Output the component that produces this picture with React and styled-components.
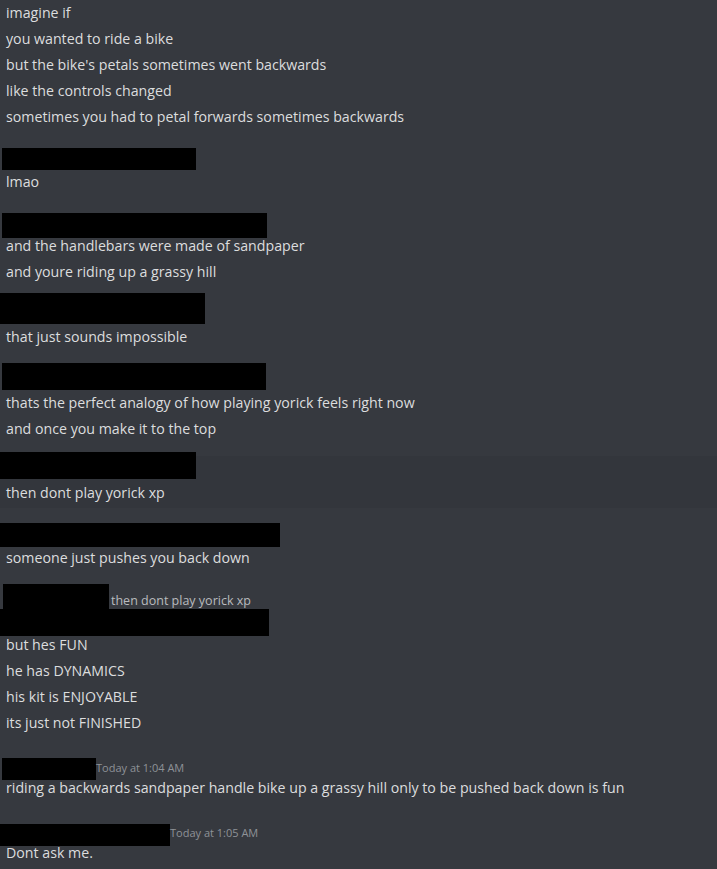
import styled, { createGlobalStyle } from "styled-components";

const GlobalStyle = createGlobalStyle`
  html, body {
    margin: 0;
    padding: 0;
    background: #36393f;
  }
  body {
    width: 717px;
    height: 869px;
    overflow: hidden;
  }
`;

const Chat = styled.div`
  width: 717px;
  height: 869px;
  overflow: hidden;
  background: #36393f;
  font-family: "Open Sans", "Noto Sans", sans-serif;
  color: #dcddde;
`;

const Group = styled.div`
  margin-top: ${(p) => p.$gap}px;
  padding-top: ${(p) => (p.$hover ? 2 : 0)}px;
  padding-bottom: 2px;
  background: ${(p) => (p.$hover ? "#33363c" : "transparent")};
`;

const Reply = styled.div`
  display: flex;
  height: 20px;
  align-items: flex-start;
`;

const ReplyText = styled.span`
  font-size: 12.5px;
  line-height: 20px;
  color: #b9bbbe;
  margin-left: 2px;
  padding-top: 1px;
`;

const Header = styled.div`
  display: flex;
  align-items: flex-start;
  height: 22px;
`;

// black box drawn over the user name
const Redaction = styled.div`
  flex: none;
  background: #000;
  width: ${(p) => p.$w}px;
  height: ${(p) => p.$h}px;
  margin-left: ${(p) => p.$x || 0}px;
  margin-top: ${(p) => p.$y || 0}px;
`;

const Timestamp = styled.span`
  font-size: 11px;
  line-height: 22px;
  padding-top: 4px;
  color: #8e9297;
`;

const Line = styled.div`
  font-size: 14.2px;
  line-height: 26px;
  padding-left: 6px;
  white-space: nowrap;
`;

const messages = [
  {
    gap: 0,
    lines: [
      "imagine if",
      "you wanted to ride a bike",
      "but the bike's petals sometimes went backwards",
      "like the controls changed",
      "sometimes you had to petal forwards sometimes backwards",
    ],
  },
  { gap: 15, name: { x: 2, y: 1, w: 194, h: 22 }, lines: ["lmao"] },
  {
    gap: 14,
    name: { x: 2, y: 2, w: 265, h: 25 },
    lines: ["and the handlebars were made of sandpaper", "and youre riding up a grassy hill"],
  },
  { gap: 15, name: { x: 0, y: -9, w: 205, h: 31 }, lines: ["that just sounds impossible"] },
  {
    gap: 16,
    name: { x: 2, y: -5, w: 264, h: 27 },
    lines: [
      "thats the perfect analogy of how playing yorick feels right now",
      "and once you make it to the top",
    ],
  },
  { gap: 12, hover: true, name: { x: 0, y: -6, w: 196, h: 27 }, lines: ["then dont play yorick xp"] },
  { gap: 15, name: { x: 0, y: 0, w: 280, h: 24 }, lines: ["someone just pushes you back down"] },
  {
    gap: 17,
    reply: { box: { x: 3, y: -6, w: 106, h: 25 }, text: "then dont play yorick xp" },
    name: { x: 0, y: -1, w: 269, h: 27 },
    lines: ["but hes FUN", "he has DYNAMICS", "his kit is ENJOYABLE", "its just not FINISHED"],
  },
  {
    gap: 15,
    name: { x: 2, y: 5, w: 94, h: 22 },
    time: "Today at 1:04 AM",
    lines: [
      "riding a backwards sandpaper handle bike up a grassy hill only to be pushed back down is fun",
    ],
  },
  {
    gap: 15,
    name: { x: 0, y: 6, w: 170, h: 22 },
    time: "Today at 1:05 AM",
    lines: ["Dont ask me."],
  },
];

function Message({ msg }) {
  return (
    <Group $gap={msg.gap} $hover={msg.hover}>
      {msg.reply && (
        <Reply>
          <Redaction
            $x={msg.reply.box.x}
            $y={msg.reply.box.y}
            $w={msg.reply.box.w}
            $h={msg.reply.box.h}
          />
          <ReplyText>{msg.reply.text}</ReplyText>
        </Reply>
      )}
      {msg.name && (
        <Header>
          <Redaction $x={msg.name.x} $y={msg.name.y} $w={msg.name.w} $h={msg.name.h} />
          {msg.time && <Timestamp>{msg.time}</Timestamp>}
        </Header>
      )}
      {msg.lines.map((text, i) => (
        <Line key={i}>{text}</Line>
      ))}
    </Group>
  );
}

export default function App() {
  return (
    <Chat>
      <GlobalStyle />
      {messages.map((msg, i) => (
        <Message key={i} msg={msg} />
      ))}
    </Chat>
  );
}
